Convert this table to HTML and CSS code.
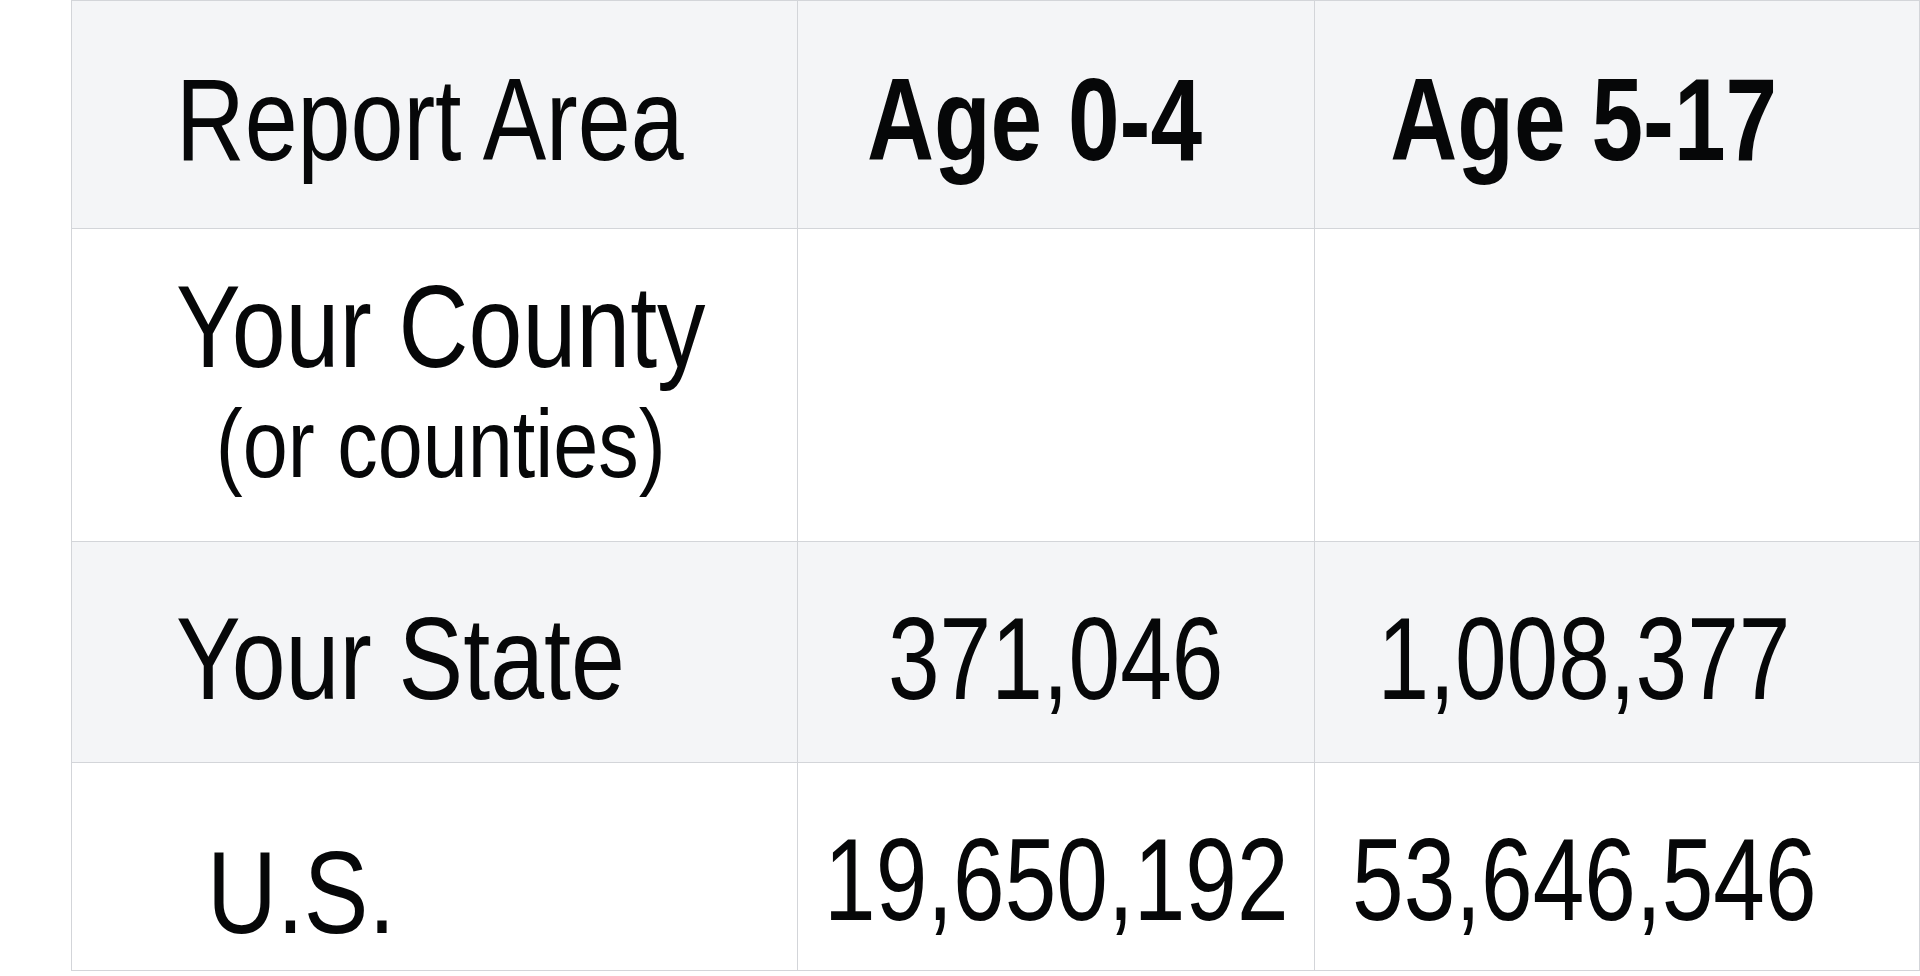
FILE: index.html
```html
<!DOCTYPE html>
<html>
<head>
    <title>Population by Age</title>
    <link rel="stylesheet" href="styles.css">
</head>
<body>
    <table class="age-table">
        <colgroup>
            <col class="col-area">
            <col class="col-young">
            <col class="col-school">
        </colgroup>
        <thead>
            <tr class="row-head shaded">
                <th class="area"><div class="fit"><span class="txt">Report Area</span></div></th>
                <th class="num bold first"><div class="fit"><span class="txt">Age 0-4</span></div></th>
                <th class="num bold last"><div class="fit"><span class="txt">Age 5-17</span></div></th>
            </tr>
        </thead>
        <tbody>
            <tr class="row-county">
                <td class="area">
                    <div class="fit">
                        <div class="txt county">
                            <div>Your County</div>
                            <div class="sub">(or counties)</div>
                        </div>
                    </div>
                </td>
                <td class="num"></td>
                <td class="num last"></td>
            </tr>
            <tr class="row-state shaded">
                <td class="area"><div class="fit"><span class="txt">Your State</span></div></td>
                <td class="num"><div class="fit"><span class="txt">371,046</span></div></td>
                <td class="num last"><div class="fit"><span class="txt">1,008,377</span></div></td>
            </tr>
            <tr class="row-us">
                <td class="area us"><div class="fit"><span class="txt">U.S.</span></div></td>
                <td class="num"><div class="fit"><span class="txt">19,650,192</span></div></td>
                <td class="num last"><div class="fit"><span class="txt">53,646,546</span></div></td>
            </tr>
        </tbody>
    </table>
</body>
</html>
```

FILE: styles.css
```css
body {
    margin: 0;
    padding: 0;
    background-color: #ffffff;
    font-family: "Liberation Sans", Arial, sans-serif;
    color: #060708;
    overflow: hidden;
}

.age-table {
    margin-left: 71px;
    width: 1848px;
    table-layout: fixed;
    border-collapse: collapse;
    border: 1px solid #d3d5d9;
}

.col-area {
    width: 726px;
}

.col-young {
    width: 517px;
}

.col-school {
    width: 605px;
}

.age-table th,
.age-table td {
    border: 1px solid #d3d5d9;
    vertical-align: top;
    font-size: 116px;
    line-height: 116px;
    font-weight: normal;
    padding: 0;
    white-space: nowrap;
}

.shaded {
    background-color: #f4f5f7;
}

/* the print is squeezed sideways, so every text is narrowed */
.fit {
    display: flex;
}

.txt {
    display: block;
    flex: none;
    transform: scaleX(0.8);
}

.area .fit {
    justify-content: flex-start;
    padding-left: 104px;
}

.area .txt {
    transform: scaleX(0.835);
    transform-origin: left center;
}

.row-head .area .txt {
    transform: scaleX(0.82);
}

.num .fit {
    justify-content: center;
}

.num .txt {
    transform-origin: center center;
}

.num.first .fit {
    padding-right: 42px;
}

.num.last .fit {
    padding-right: 66px;
}

.bold {
    font-weight: bold !important;
}

.row-head {
    height: 228px;
}

.row-head th {
    padding-top: 61px;
}

.row-county {
    height: 313px;
}

.row-county td {
    padding-top: 40px;
}

.county {
    text-align: center;
}

.county .sub {
    font-size: 97px;
    line-height: 118px;
}

.row-state {
    height: 221px;
}

.row-state td {
    padding-top: 59px;
}

.row-us {
    height: 208px;
}

.row-us td {
    padding-top: 59px;
}

.row-us td.us {
    padding-top: 72px;
}

.row-us td.us .fit {
    padding-left: 135px;
}
```
